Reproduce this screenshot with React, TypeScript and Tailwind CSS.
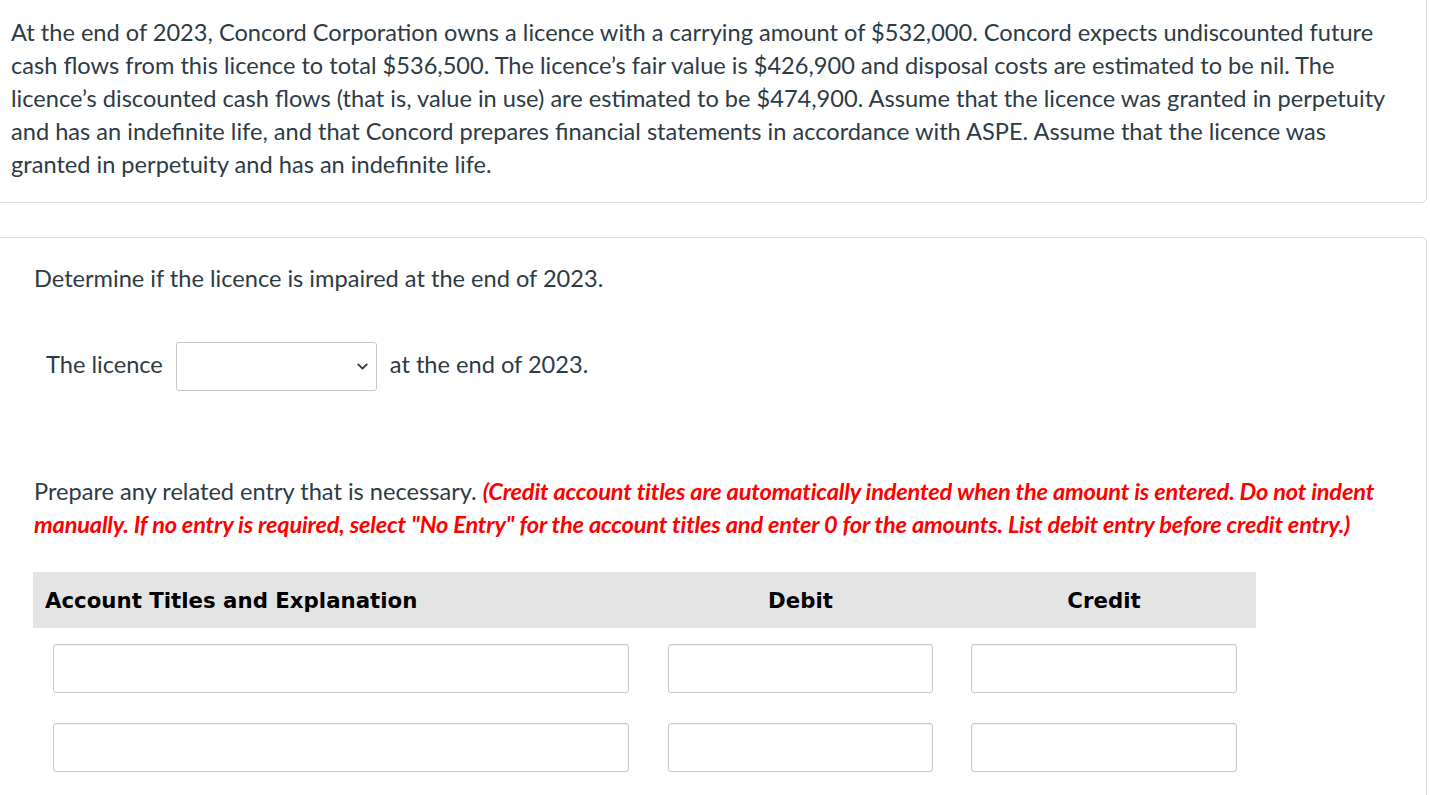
import { ChevronDown } from "lucide-react";

const lato = { fontFamily: "Lato, 'Open Sans', sans-serif" };

function Field({ className }: { className: string }) {
  return (
    <div
      className={`h-[49px] rounded-[3px] border border-[#c8c8c8] bg-white shadow-[inset_0_1px_1px_rgba(0,0,0,0.06)] ${className}`}
    />
  );
}

export default function App() {
  return (
    <div className="w-[1430px] h-[795px] overflow-hidden bg-white text-[#2d3b45]" style={lato}>
      {/* Question stem */}
      <div className="w-[1427px] -mt-px border border-l-0 border-[#dcdcdc] rounded-br-md pl-[11px] pr-4 pt-[16px] pb-[21px] text-[23.6px] leading-[33px]">
        At the end of 2023, Concord Corporation owns a licence with a carrying amount of $532,000. Concord expects
        undiscounted future cash flows from this licence to total $536,500. The licence’s fair value is $426,900 and
        disposal costs are estimated to be nil. The licence’s discounted cash flows (that is, value in use) are estimated
        to be $474,900. Assume that the licence was granted in perpetuity and has an indefinite life, and that Concord
        prepares financial statements in accordance with ASPE. Assume that the licence was granted in perpetuity and has
        an indefinite life.
      </div>

      {/* Part */}
      <div className="mt-[34px] w-[1427px] h-[600px] border border-l-0 border-[#dcdcdc] rounded-tr-md pl-[34px] pt-[24px] text-[23.6px] leading-[33px]">
        <p>Determine if the licence is impaired at the end of 2023.</p>

        <div className="mt-[47px] ml-[12px] flex items-center">
          <span className="-mt-[4px]">The licence</span>
          <div className="ml-[13px] h-[49px] w-[201px] rounded-[3px] border border-[#c8c8c8] bg-white flex items-center justify-end pr-[5px]">
            <ChevronDown className="w-[17px] h-[17px] text-[#3a3a3a]" strokeWidth={2.6} />
          </div>
          <span className="ml-[13px] -mt-[4px]">at the end of 2023.</span>
        </div>

        <p className="mt-[84px] pr-10">
          Prepare any related entry that is necessary.{" "}
          <span className="text-[#ff0000] font-bold italic tracking-[-0.18px]">
            (Credit account titles are automatically indented when the amount is entered. Do not indent manually. If no
            entry is required, select "No Entry" for the account titles and enter 0 for the amounts. List debit entry
            before credit entry.)
          </span>
        </p>

        <div className="mt-[31px] -ml-px w-[1223px]">
          <div
            className="h-[56px] bg-[#e4e4e4] grid grid-cols-[616px_303px_304px] items-center text-black font-bold text-[21.3px]"
            style={{ fontFamily: "'DejaVu Sans', Verdana, sans-serif" }}
          >
            <span className="pl-[12px]">Account Titles and Explanation</span>
            <span className="text-center">Debit</span>
            <span className="text-center">Credit</span>
          </div>

          <div className="grid grid-cols-[616px_303px_304px] pt-[16px] gap-y-[30px]">
            <div className="px-[20px]">
              <Field className="w-full" />
            </div>
            <div className="px-[19px]">
              <Field className="w-full" />
            </div>
            <div className="px-[19px]">
              <Field className="w-full" />
            </div>
            <div className="px-[20px]">
              <Field className="w-full" />
            </div>
            <div className="px-[19px]">
              <Field className="w-full" />
            </div>
            <div className="px-[19px]">
              <Field className="w-full" />
            </div>
          </div>
        </div>
      </div>
    </div>
  );
}
